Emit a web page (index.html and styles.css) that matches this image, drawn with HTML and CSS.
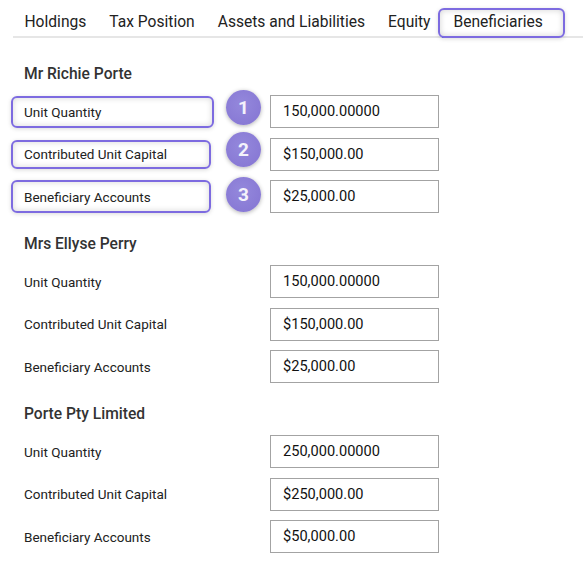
FILE: index.html
```
<!DOCTYPE html>
<html lang="en">
<head>
    <meta charset="UTF-8">
    <meta name="viewport" content="width=device-width, initial-scale=1.0">
    <title>Beneficiaries</title>
    <link rel="stylesheet" href="styles.css">
</head>
<body>
    <nav class="tabs">
        <span class="tab">Holdings</span>
        <span class="tab">Tax Position</span>
        <span class="tab">Assets and Liabilities</span>
        <span class="tab">Equity</span>
        <span class="tab active">Beneficiaries<span class="tab-mark"></span></span>
    </nav>

    <div class="content">
        <!-- Mr Richie Porte (annotated) -->
        <section class="person">
            <h2>Mr Richie Porte</h2>
            <div class="row">
                <span class="mark mark-1"></span>
                <label>Unit Quantity</label>
                <span class="badge badge-1">1</span>
                <div class="field">150,000.00000</div>
            </div>
            <div class="row">
                <span class="mark mark-2"></span>
                <label>Contributed Unit Capital</label>
                <span class="badge badge-2">2</span>
                <div class="field">$150,000.00</div>
            </div>
            <div class="row">
                <span class="mark mark-3"></span>
                <label>Beneficiary Accounts</label>
                <span class="badge badge-3">3</span>
                <div class="field">$25,000.00</div>
            </div>
        </section>

        <section class="person">
            <h2>Mrs Ellyse Perry</h2>
            <div class="row">
                <label>Unit Quantity</label>
                <div class="field">150,000.00000</div>
            </div>
            <div class="row">
                <label>Contributed Unit Capital</label>
                <div class="field">$150,000.00</div>
            </div>
            <div class="row">
                <label>Beneficiary Accounts</label>
                <div class="field">$25,000.00</div>
            </div>
        </section>

        <section class="person">
            <h2>Porte Pty Limited</h2>
            <div class="row">
                <label>Unit Quantity</label>
                <div class="field">250,000.00000</div>
            </div>
            <div class="row">
                <label>Contributed Unit Capital</label>
                <div class="field">$250,000.00</div>
            </div>
            <div class="row">
                <label>Beneficiary Accounts</label>
                <div class="field">$50,000.00</div>
            </div>
        </section>
    </div>
</body>
</html>
```

FILE: styles.css
```
body {
    font-family: Roboto, "Liberation Sans", sans-serif;
    margin: 0;
    padding: 0;
    background-color: #ffffff;
    color: #222;
}

/* Tab bar */
.tabs {
    display: flex;
    margin-left: 13px;
    height: 36px;
    border-bottom: 2px solid #e6e6e6;
}
.tab {
    position: relative;
    padding: 0 11.5px;
    font-size: 15.6px;
    line-height: 44px;
    height: 38px;
    color: #222;
    white-space: nowrap;
}
.tab.active {
    border-bottom: 2px solid #3e6ed0;
    height: 36px;
}
.tab-mark {
    position: absolute;
    top: 8px;
    left: -4px;
    right: -11px;
    bottom: -2px;
    border: 2px solid #7d6be0;
    border-radius: 6px;
    box-shadow: inset 0 0 6px rgba(0, 0, 0, 0.18), 0 1px 4px rgba(0, 0, 0, 0.15);
    box-sizing: border-box;
}

/* Beneficiary sections */
.content {
    padding: 26px 0 0 24px;
}
.person {
    display: flex;
    flex-direction: column;
    gap: 9.5px;
    margin-bottom: 21px;
}
.person h2 {
    margin: 0 0 1.5px 0;
    font-size: 15.6px;
    font-weight: 500;
    line-height: 20px;
    color: #333;
}
.row {
    position: relative;
    display: flex;
    align-items: center;
    height: 33px;
}
.row label {
    width: 246px;
    font-size: 13.5px;
    color: #222;
    position: relative;
    z-index: 1;
}
.field {
    width: 169px;
    height: 33px;
    box-sizing: border-box;
    border: 1px solid #a3a3a3;
    padding: 0 12px;
    font-size: 14.6px;
    line-height: 31px;
    color: #111;
}

/* Annotation boxes around labels */
.mark {
    position: absolute;
    left: -13px;
    border: 2px solid #7d6be0;
    border-radius: 6px;
    box-sizing: border-box;
    box-shadow: inset 0 0 6px rgba(0, 0, 0, 0.16), 0 1px 4px rgba(0, 0, 0, 0.15);
}
.mark-1 { top: 1px; width: 203px; height: 32px; }
.mark-2 { top: 2px; width: 200px; height: 29px; }
.mark-3 { top: 0; width: 200px; height: 33px; }

/* Numbered badges */
.badge {
    position: absolute;
    left: 202px;
    width: 35px;
    height: 35px;
    border-radius: 50%;
    background: radial-gradient(circle at 45% 40%, #9488dc, #8474d2);
    box-shadow: 0 1px 4px rgba(0, 0, 0, 0.3);
    color: #f4f2fb;
    font-size: 19px;
    font-weight: 700;
    line-height: 35px;
    text-align: center;
}
.badge-1 { top: -5px; }
.badge-2 { top: -6px; }
.badge-3 { top: -3px; }
```
